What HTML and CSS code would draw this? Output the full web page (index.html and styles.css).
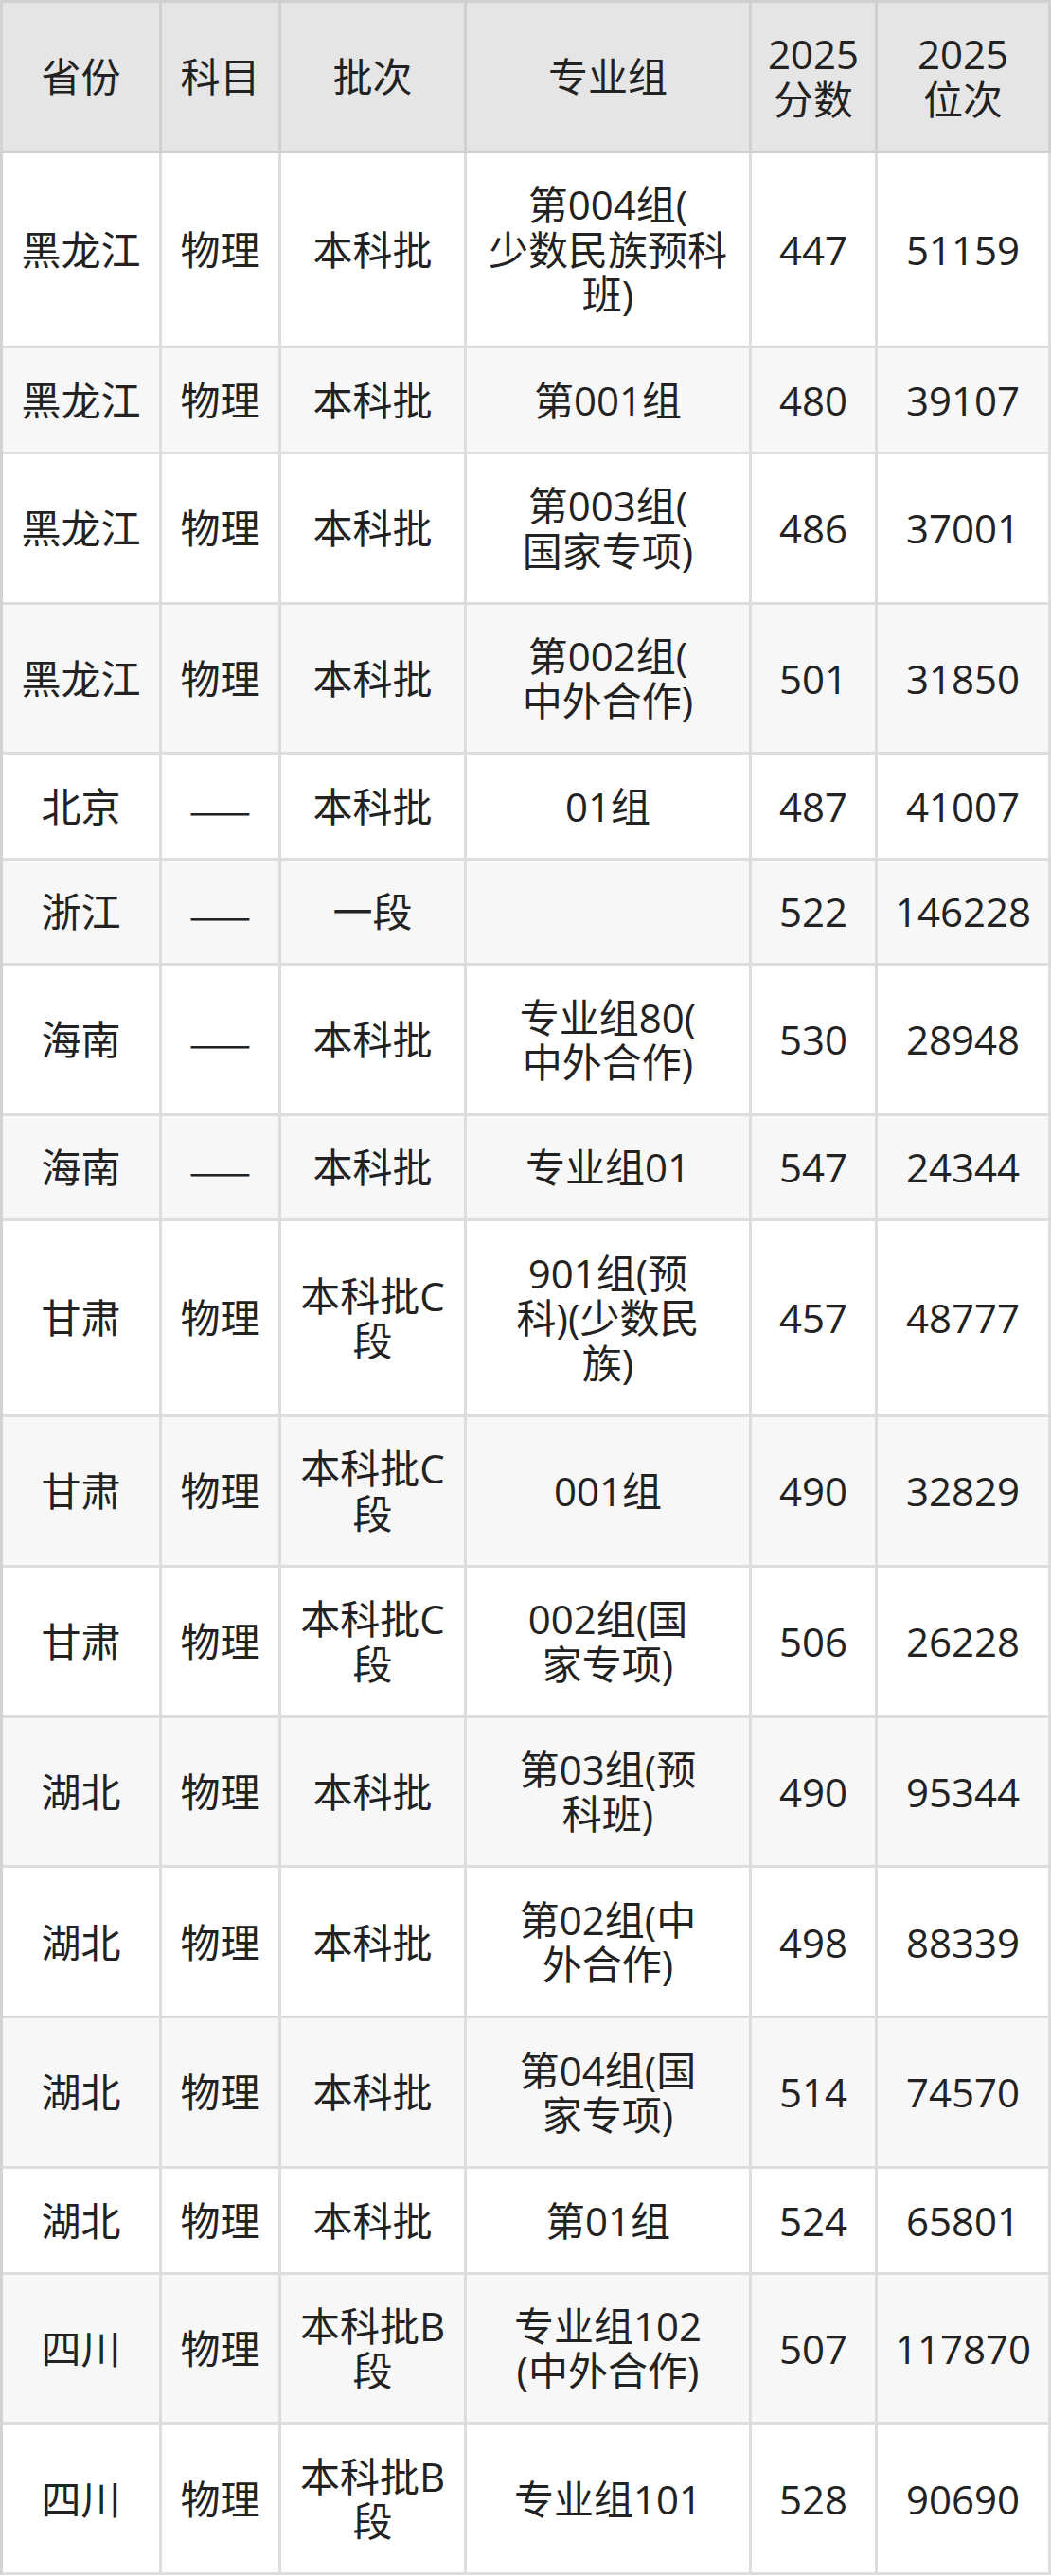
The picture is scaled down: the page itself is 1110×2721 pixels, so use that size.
FILE: index.html
```html
<!DOCTYPE html>
<html lang="zh-CN">
<head>
<meta charset="utf-8">
<title>2025 分数与位次</title>
<link rel="stylesheet" href="styles.css">
</head>
<body>
<table class="score-table">
  <thead>
    <tr>
      <th class="c-prov">省份</th>
      <th class="c-subj">科目</th>
      <th class="c-batch">批次</th>
      <th class="c-group">专业组</th>
      <th class="c-score">2025<br>分数</th>
      <th class="c-rank">2025<br>位次</th>
    </tr>
  </thead>
  <tbody>
    <tr><td>黑龙江</td><td>物理</td><td>本科批</td><td>第004组(<br>少数民族预科<br>班)</td><td>447</td><td>51159</td></tr>
    <tr><td>黑龙江</td><td>物理</td><td>本科批</td><td>第001组</td><td>480</td><td>39107</td></tr>
    <tr><td>黑龙江</td><td>物理</td><td>本科批</td><td>第003组(<br>国家专项)</td><td>486</td><td>37001</td></tr>
    <tr><td>黑龙江</td><td>物理</td><td>本科批</td><td>第002组(<br>中外合作)</td><td>501</td><td>31850</td></tr>
    <tr><td>北京</td><td><span class="dash">——</span></td><td>本科批</td><td>01组</td><td>487</td><td>41007</td></tr>
    <tr><td>浙江</td><td><span class="dash">——</span></td><td>一段</td><td></td><td>522</td><td>146228</td></tr>
    <tr><td>海南</td><td><span class="dash">——</span></td><td>本科批</td><td>专业组80(<br>中外合作)</td><td>530</td><td>28948</td></tr>
    <tr><td>海南</td><td><span class="dash">——</span></td><td>本科批</td><td>专业组01</td><td>547</td><td>24344</td></tr>
    <tr><td>甘肃</td><td>物理</td><td>本科批C<br>段</td><td>901组(预<br>科)(少数民<br>族)</td><td>457</td><td>48777</td></tr>
    <tr><td>甘肃</td><td>物理</td><td>本科批C<br>段</td><td>001组</td><td>490</td><td>32829</td></tr>
    <tr><td>甘肃</td><td>物理</td><td>本科批C<br>段</td><td>002组(国<br>家专项)</td><td>506</td><td>26228</td></tr>
    <tr><td>湖北</td><td>物理</td><td>本科批</td><td>第03组(预<br>科班)</td><td>490</td><td>95344</td></tr>
    <tr><td>湖北</td><td>物理</td><td>本科批</td><td>第02组(中<br>外合作)</td><td>498</td><td>88339</td></tr>
    <tr><td>湖北</td><td>物理</td><td>本科批</td><td>第04组(国<br>家专项)</td><td>514</td><td>74570</td></tr>
    <tr><td>湖北</td><td>物理</td><td>本科批</td><td>第01组</td><td>524</td><td>65801</td></tr>
    <tr><td>四川</td><td>物理</td><td>本科批B<br>段</td><td>专业组102<br>(中外合作)</td><td>507</td><td>117870</td></tr>
    <tr><td>四川</td><td>物理</td><td>本科批B<br>段</td><td>专业组101</td><td>528</td><td>90690</td></tr>
  </tbody>
</table>
</body>
</html>
```

FILE: styles.css
```css
html, body {
  margin: 0;
  padding: 0;
  background: #ffffff;
}

.score-table {
  width: 1110px;
  table-layout: fixed;
  border-collapse: separate;
  border-spacing: 0;
  border-top: 3px solid #d0d0d0;
  border-left: 3px solid #d3d3d3;
  box-sizing: border-box;
  font-family: "Open Sans", "Noto Sans CJK SC", sans-serif;
  font-size: 42px;
  line-height: 47.5px;
  color: #222222;
}

.score-table th,
.score-table td {
  box-sizing: border-box;
  padding: 30.45px 4px;
  text-align: center;
  vertical-align: middle;
  white-space: nowrap;
  font-weight: normal;
  border-right: 3px solid #dddddd;
  border-bottom: 3px solid #dddddd;
}

.score-table th {
  background: #e5e5e5;
  border-right-color: #d0d0d0;
  border-bottom-color: #cfcfcf;
}

.c-prov { width: 168px; }
.c-subj { width: 126px; }
.c-batch { width: 196px; }
.c-group { width: 301px; }
.c-score { width: 133px; }
.c-rank { width: 183px; }

.score-table tbody tr:nth-child(even) td {
  background: #f7f7f7;
}

.dash {
  display: inline-block;
  vertical-align: top;
  height: 47.5px;
  font-family: "Noto Sans CJK SC", sans-serif;
  font-size: 39px;
  line-height: 47.5px;
  letter-spacing: 3px;
  margin-right: -3px;
  position: relative;
  top: 3px;
}
```
